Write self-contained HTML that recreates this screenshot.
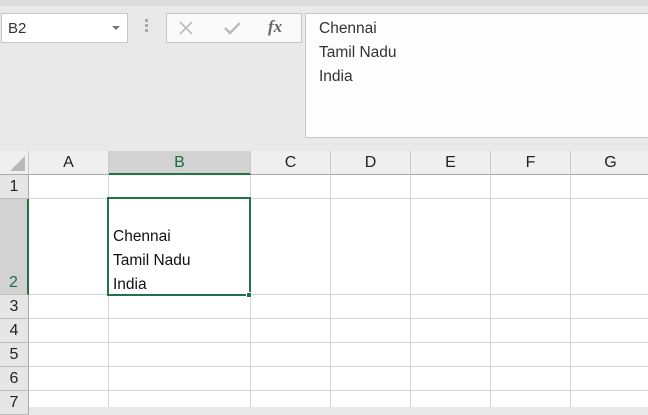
<!DOCTYPE html>
<html><head><style>
*{margin:0;padding:0;box-sizing:border-box}
body{width:648px;height:407px;overflow:hidden;background:#e9e9e9;font-family:"Liberation Sans",sans-serif;position:relative}
.a{position:absolute}
.txt{font-size:15.5px;color:#222}
.hd{position:absolute;top:151px;height:24px;background:#efefef;border-right:1px solid #c8c8c8;border-bottom:1px solid #ababab;font-size:16px;color:#222;text-align:center;line-height:24px}
.rh{position:absolute;left:0;width:29px;background:#e6e6e6;border-right:1px solid #ababab;border-bottom:1px solid #bdbdbd;font-size:16px;color:#222;text-align:center}
.vl{position:absolute;top:175px;bottom:0;width:1px;background:#d4d4d4}
.hl{position:absolute;left:29px;right:0;height:1px;background:#d4d4d4}
</style></head><body>
<div class="a" style="left:0;top:0;width:648px;height:6px;background:#dcdcdc"></div>
<div class="a" style="left:1px;top:13px;width:127px;height:30px;background:#fff;border:1px solid #c6c6c6"></div>
<div class="a" style="left:8px;top:20px;font-size:15px;color:#333">B2</div>
<div class="a" style="left:112px;top:26px;width:0;height:0;border-left:4px solid transparent;border-right:4px solid transparent;border-top:4px solid #777"></div>
<div class="a" style="left:145px;top:19px;width:3px;height:3px;background:#aaa;box-shadow:0 5px 0 #aaa,0 10px 0 #aaa"></div>
<div class="a" style="left:166px;top:13px;width:136px;height:30px;background:#fafafa;border:1px solid #c6c6c6"></div>
<svg class="a" style="left:178px;top:20px" width="16" height="16"><path d="M2 2L14 14M14 2L2 14" stroke="#bbb" stroke-width="1.6"/></svg>
<svg class="a" style="left:223px;top:20px" width="20" height="16"><path d="M2 8L7 13L17 3" stroke="#bbb" stroke-width="2.4" fill="none"/></svg>
<div class="a" style="left:268px;top:17px;font-family:'Liberation Serif',serif;font-style:italic;font-weight:bold;font-size:17px;color:#666">fx</div>
<div class="a" style="left:305px;top:13px;width:343px;height:125px;background:#fdfdfd;border:1px solid #c6c6c6;border-right:none"></div>
<div class="a txt" style="left:319px;top:17px;line-height:24px;color:#333">Chennai<br>Tamil Nadu<br>India</div>

<div class="a" style="left:0;top:151px;width:29px;height:24px;background:#efefef;border-right:1px solid #c8c8c8;border-bottom:1px solid #ababab"></div>
<div class="a" style="left:10px;top:156px;width:0;height:0;border-left:15px solid transparent;border-bottom:15px solid #b8b8b8"></div>
<div class="hd" style="left:29px;width:80px">A</div>
<div class="hd" style="left:109px;width:142px;background:#d2d2d2;color:#1e6b40;border-bottom:2px solid #217346">B</div>
<div class="hd" style="left:251px;width:80px">C</div>
<div class="hd" style="left:331px;width:80px">D</div>
<div class="hd" style="left:411px;width:80px">E</div>
<div class="hd" style="left:491px;width:80px">F</div>
<div class="hd" style="left:571px;width:80px">G</div>

<div class="a" style="left:29px;top:175px;width:619px;height:232px;background:#fff"></div>
<div class="vl" style="left:108px"></div><div class="vl" style="left:250px"></div><div class="vl" style="left:330px"></div><div class="vl" style="left:410px"></div><div class="vl" style="left:490px"></div><div class="vl" style="left:570px"></div>
<div class="hl" style="top:198px"></div><div class="hl" style="top:294px"></div><div class="hl" style="top:318px"></div><div class="hl" style="top:342px"></div><div class="hl" style="top:366px"></div><div class="hl" style="top:390px"></div>

<div class="rh" style="top:175px;height:24px;line-height:24px">1</div>
<div class="rh" style="top:199px;height:96px;background:#d2d2d2;color:#1e6b40;border-right:2px solid #217346;line-height:20px;padding-top:74px">2</div>
<div class="rh" style="top:295px;height:24px;line-height:24px">3</div>
<div class="rh" style="top:319px;height:24px;line-height:24px">4</div>
<div class="rh" style="top:343px;height:24px;line-height:24px">5</div>
<div class="rh" style="top:367px;height:24px;line-height:24px">6</div>
<div class="rh" style="top:391px;height:24px;line-height:24px">7</div>

<div class="a" style="left:107px;top:197px;width:144px;height:99px;border:2px solid #217346"></div>
<div class="a" style="left:246px;top:292px;width:6px;height:6px;background:#217346;border:1px solid #fff"></div>
<div class="a txt" style="left:113px;top:225px;line-height:24px;color:#111">Chennai<br>Tamil Nadu<br>India</div>
</body></html>
